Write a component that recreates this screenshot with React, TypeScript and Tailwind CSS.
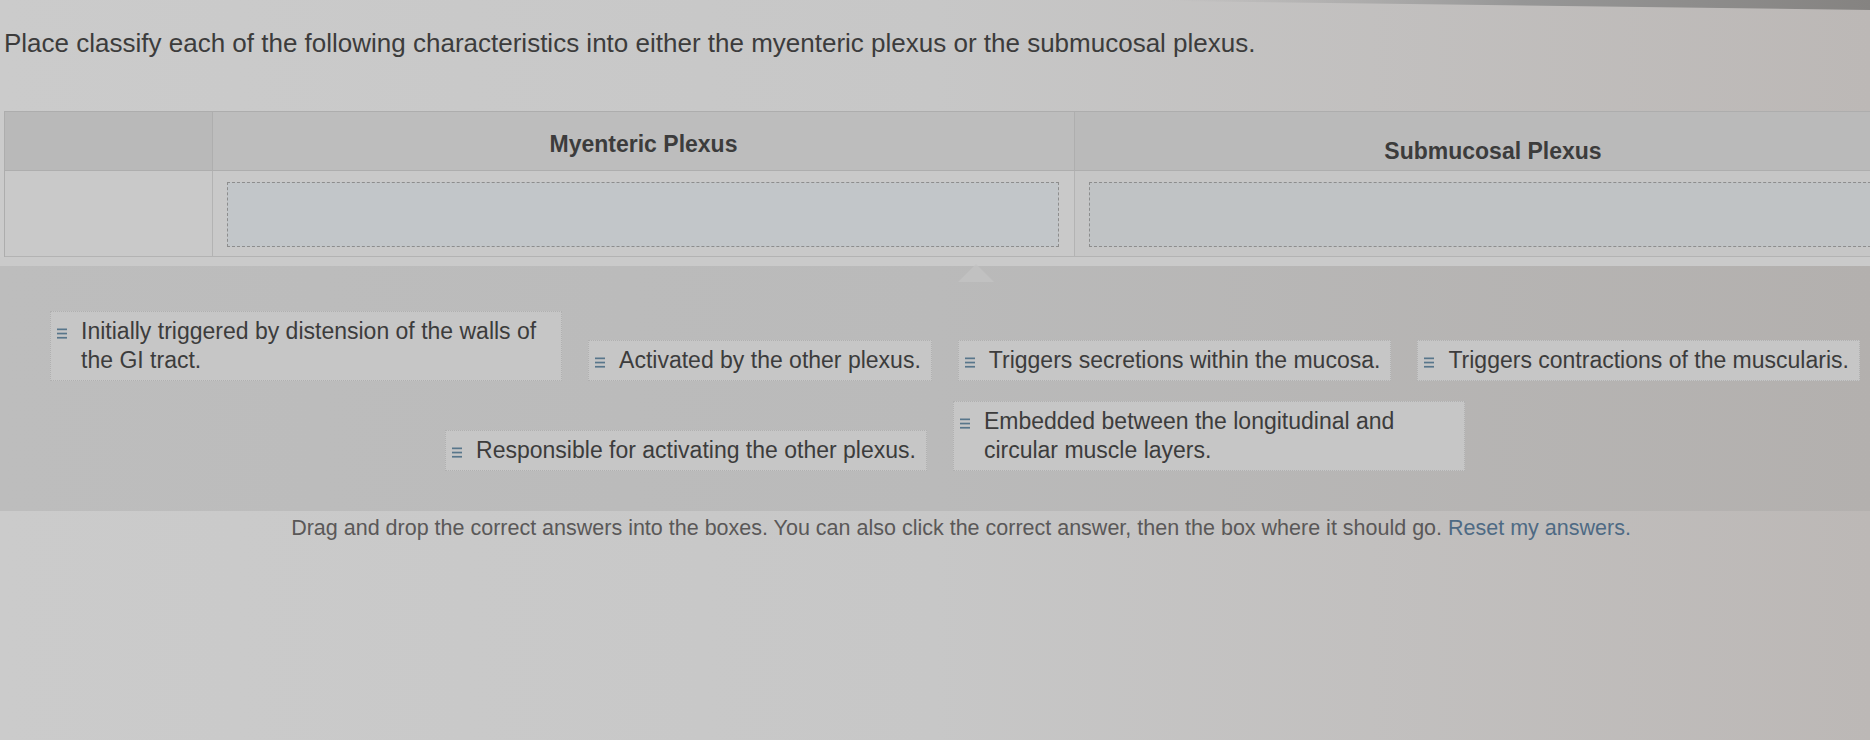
import React from "react";

function Grip() {
  return (
    <svg width="10" height="11" viewBox="0 0 10 11" className="shrink-0 mt-[11px]">
      <rect x="0" y="0.5" width="10" height="1.7" fill="#58768b" />
      <rect x="0" y="4.7" width="10" height="1.7" fill="#58768b" />
      <rect x="0" y="8.9" width="10" height="1.7" fill="#58768b" />
    </svg>
  );
}

function Item({ text }: { text: string }) {
  return (
    <div className="flex gap-[14px] pl-[6px] pr-[10px] py-[5px] bg-[#c6c6c6] border border-dotted border-[#b0b0b0]">
      <Grip />
      <span className="max-w-[470px] text-[23px] leading-[29px] text-[#3c3c3c]">{text}</span>
    </div>
  );
}

export default function App() {
  return (
    <div className="relative w-[1870px] h-[740px] overflow-hidden bg-linear-to-r from-[#cbcbcb] via-[#c7c7c7] to-[#bcb8b6] font-['Liberation_Sans',Arial,sans-serif]">
      <svg className="absolute top-0 right-0" width="700" height="12" viewBox="0 0 700 12" preserveAspectRatio="none">
        <defs>
          <linearGradient id="g" x1="0" x2="1" y1="0" y2="0">
            <stop offset="0" stopColor="#a3a3a3" stopOpacity="0" />
            <stop offset="0.5" stopColor="#969696" />
            <stop offset="1" stopColor="#858381" />
          </linearGradient>
        </defs>
        <polygon points="0,0 700,0 700,10 0,1" fill="url(#g)" />
      </svg>

      <p className="pl-[4px] pt-[28px] text-[26px] leading-[30px] text-[#3c3c3c]">
        Place classify each of the following characteristics into either the myenteric plexus or the submucosal plexus.
      </p>

      <div className="mt-[53px] ml-[4px] w-[1906px] grid grid-cols-[208px_862px_836px] border-t border-l border-[#adadad]">
        <div className="h-[59px] bg-[#b9b9b9] border-r border-b border-[#aeaeae]" />
        <div className="h-[59px] bg-[#bdbdbd] border-r border-b border-[#aeaeae] flex items-center justify-center pt-[6px] text-[23px] font-bold text-[#3c3c3c]">
          Myenteric Plexus
        </div>
        <div className="h-[59px] bg-[#bababa] border-b border-[#aeaeae] flex items-center justify-center pt-[20px] text-[23px] font-bold text-[#3c3c3c]">
          Submucosal Plexus
        </div>

        <div className="h-[86px] bg-[#c9c9c9] border-r border-b border-[#b3b3b3]" />
        <div className="h-[86px] bg-[#c9c9c9] border-r border-b border-[#b3b3b3] pt-[11px] pb-[9px] pl-[14px] pr-[15px]">
          <div className="h-full bg-[#c2c6c9] border border-dashed border-[#8d8d8d]" />
        </div>
        <div className="h-[86px] bg-[#c6c6c6] border-b border-[#b3b3b3] pt-[11px] pb-[9px] pl-[14px] pr-[15px]">
          <div className="h-full bg-[#c0c3c5] border border-dashed border-[#8d8d8d]" />
        </div>
      </div>

      <div className="h-[9px] bg-[#cacaca]" />

      <div className="relative h-[245px] bg-linear-to-r from-[#bdbdbd] via-[#bababa] to-[#b3b0ae] pt-[45px]">
        <svg className="absolute left-[958px] top-[-2px]" width="36" height="18" viewBox="0 0 36 18">
          <polygon points="18,0 36,18 0,18" fill="#c3c3c3" opacity="0.8" />
        </svg>
        <div className="w-[1870px] ml-[20px] flex flex-wrap justify-center items-end gap-x-[26px] gap-y-[20px]">
          <Item text="Initially triggered by distension of the walls of the GI tract." />
          <Item text="Activated by the other plexus." />
          <Item text="Triggers secretions within the mucosa." />
          <Item text="Triggers contractions of the muscularis." />
          <Item text="Responsible for activating the other plexus." />
          <Item text="Embedded between the longitudinal and circular muscle layers." />
        </div>
      </div>

      <p className="pt-[2px] pl-[52px] text-center text-[21.5px] leading-[30px] text-[#5a5858]">
        Drag and drop the correct answers into the boxes. You can also click the correct answer, then the box where it should go.{" "}
        <span className="text-[#4e6a84]">Reset my answers.</span>
      </p>
    </div>
  );
}
